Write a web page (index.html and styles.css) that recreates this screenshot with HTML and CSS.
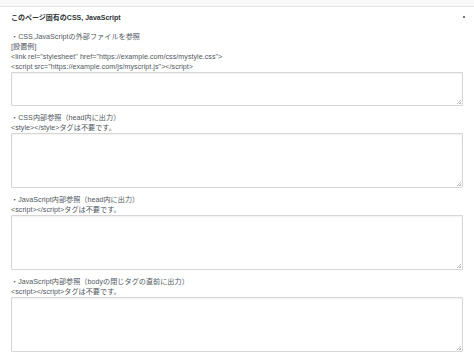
FILE: index.html
```html
<!DOCTYPE html>
<html lang="ja">

<head>
    <meta charset="utf-8">
    <title>このページ固有のCSS, JavaScript</title>
    <link rel="stylesheet" href="styles.css">
</head>

<body>
    <div class="topbar"></div>
    <div class="postbox">
        <div class="hndle">
            <span class="hndle-title">このページ固有のCSS, JavaScript</span>
            <span class="toggle"></span>
        </div>
        <div class="inside">
            <div class="field">
                <p class="label">・CSS,JavaScriptの外部ファイルを参照</p>
                <p class="label">[設置例]</p>
                <p class="label">&lt;link rel="stylesheet" href="https://example.com/css/mystyle.css"&gt;</p>
                <p class="label">&lt;script src="https://example.com/js/myscript.js"&gt;&lt;/script&gt;</p>
                <div class="code-wrap">
                    <textarea class="code small"></textarea>
                </div>
            </div>
            <div class="field">
                <p class="label">・CSS内部参照（head内に出力）</p>
                <p class="label">&lt;style&gt;&lt;/style&gt;タグは不要です。</p>
                <div class="code-wrap">
                    <textarea class="code"></textarea>
                </div>
            </div>
            <div class="field">
                <p class="label">・JavaScript内部参照（head内に出力）</p>
                <p class="label">&lt;script&gt;&lt;/script&gt;タグは不要です。</p>
                <div class="code-wrap">
                    <textarea class="code"></textarea>
                </div>
            </div>
            <div class="field">
                <p class="label">・JavaScript内部参照（bodyの閉じタグの直前に出力）</p>
                <p class="label">&lt;script&gt;&lt;/script&gt;タグは不要です。</p>
                <div class="code-wrap">
                    <textarea class="code"></textarea>
                </div>
            </div>
        </div>
    </div>
</body>

</html>
```

FILE: styles.css
```css
body {
    margin: 0;
    background-color: #fff;
    font-family: "Liberation Sans", "Noto Sans CJK JP", sans-serif;
    color: #50575e;
}

.topbar {
    height: 6px;
    background-color: #f9f9f9;
    border-bottom: 1px solid #e6e6e6;
}

.hndle {
    display: flex;
    justify-content: space-between;
    align-items: center;
    padding: 5px 9px 0 11px;
    height: 10px;
}

.hndle-title {
    font-size: 7px;
    font-weight: bold;
    color: #2c3338;
}

.toggle {
    width: 2px;
    height: 2px;
    background-color: #777;
}

.inside {
    padding: 10px 11px 0 11px;
}

.field + .field {
    margin-top: 7px;
}

.label {
    margin: 0;
    font-size: 7.1px;
    letter-spacing: 0.05px;
    line-height: 10px;
    color: #50575e;
}

.code-wrap {
    position: relative;
}

/* small resize grip in the corner */
.code-wrap::after {
    content: "";
    position: absolute;
    right: 2px;
    bottom: 2px;
    width: 4px;
    height: 4px;
    background: linear-gradient(135deg, transparent 45%, #bdbdbd 45%, #bdbdbd 60%, transparent 60%, transparent 75%, #bdbdbd 75%);
}

.code {
    display: block;
    box-sizing: border-box;
    width: 100%;
    height: 55px;
    margin: 0;
    border: 1px solid #d6d6d6;
    border-radius: 1px;
    box-shadow: inset 0 1px 2px rgba(0, 0, 0, 0.06);
    background-color: #fff;
    resize: none;
}

.code.small {
    height: 34px;
}
```
